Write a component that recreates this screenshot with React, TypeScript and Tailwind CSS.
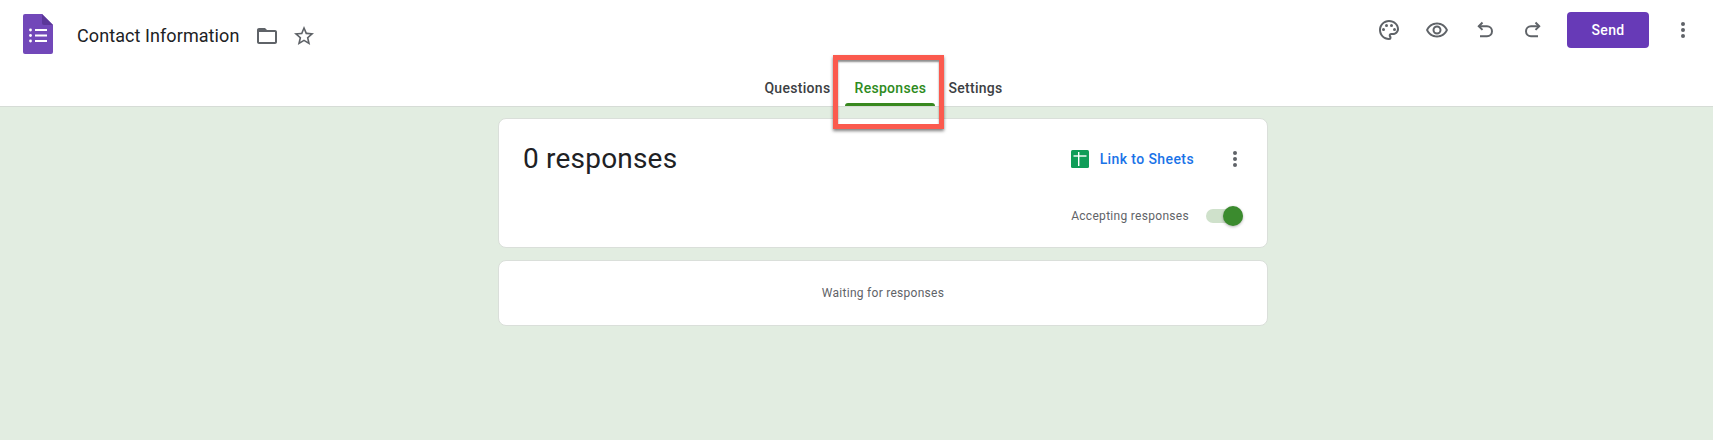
const font = "font-['Roboto','Noto_Sans',sans-serif]";

function FormsLogo() {
  return (
    <svg width="30" height="40" viewBox="0 0 30 40">
      <path d="M2 0h17l11 11v27a2 2 0 0 1-2 2H2a2 2 0 0 1-2-2V2a2 2 0 0 1 2-2z" fill="#7248b9" />
      <path d="M19 0l11 11H21a2 2 0 0 1-2-2z" fill="#5b3799" />
      <g fill="#fff">
        <circle cx="7.5" cy="16" r="1.4" />
        <circle cx="7.5" cy="21.5" r="1.4" />
        <circle cx="7.5" cy="27" r="1.4" />
        <rect x="12" y="15" width="12" height="2" />
        <rect x="12" y="20.5" width="12" height="2" />
        <rect x="12" y="26" width="12" height="2" />
      </g>
    </svg>
  );
}

function FolderIcon() {
  return (
    <svg width="24" height="24" viewBox="0 0 24 24" fill="#5f6368">
      <path d="M20 6h-8l-2-2H4c-1.1 0-2 .9-2 2v12c0 1.1.9 2 2 2h16c1.1 0 2-.9 2-2V8c0-1.1-.9-2-2-2zm0 12H4V8h16v10z" />
    </svg>
  );
}

function StarIcon() {
  return (
    <svg width="24" height="24" viewBox="0 0 24 24" fill="#5f6368">
      <path d="M22 9.24l-7.19-.62L12 2 9.19 8.63 2 9.24l5.46 4.73L5.82 21 12 17.27 18.18 21l-1.63-7.03L22 9.24zM12 15.4l-3.76 2.27 1-4.28-3.32-2.88 4.38-.38L12 6.1l1.71 4.04 4.38.38-3.32 2.88 1 4.28L12 15.4z" />
    </svg>
  );
}

function PaletteIcon() {
  return (
    <svg width="24" height="24" viewBox="0 0 24 24" fill="#5f6368">
      <path d="M12 22C6.49 22 2 17.51 2 12S6.49 2 12 2s10 4.04 10 9c0 3.31-2.69 6-6 6h-1.77c-.28 0-.5.22-.5.5 0 .12.05.23.13.33.41.47.64 1.06.64 1.67A2.5 2.5 0 0 1 12 22zm0-18c-4.41 0-8 3.59-8 8s3.59 8 8 8c.28 0 .5-.22.5-.5a.54.54 0 0 0-.14-.35c-.41-.46-.63-1.05-.63-1.65a2.5 2.5 0 0 1 2.5-2.5H16c2.21 0 4-1.79 4-4 0-3.86-3.59-7-8-7z" />
      <circle cx="6.5" cy="11.5" r="1.5" />
      <circle cx="9.5" cy="7.5" r="1.5" />
      <circle cx="14.5" cy="7.5" r="1.5" />
      <circle cx="17.5" cy="11.5" r="1.5" />
    </svg>
  );
}

function EyeIcon() {
  return (
    <svg width="24" height="24" viewBox="0 0 24 24" fill="#5f6368">
      <path d="M12 6.5c3.79 0 7.17 2.13 8.82 5.5-1.65 3.37-5.02 5.5-8.82 5.5S4.83 15.37 3.18 12C4.83 8.63 8.21 6.5 12 6.5m0-2C7 4.5 2.73 7.61 1 12c1.73 4.39 6 7.5 11 7.5s9.27-3.11 11-7.5c-1.73-4.39-6-7.5-11-7.5zm0 5a2.5 2.5 0 0 1 0 5 2.5 2.5 0 0 1 0-5m0-2c-2.48 0-4.5 2.02-4.5 4.5s2.02 4.5 4.5 4.5 4.5-2.02 4.5-4.5-2.02-4.5-4.5-4.5z" />
    </svg>
  );
}

function UndoIcon({ flip }: { flip?: boolean }) {
  return (
    <svg width="24" height="24" viewBox="0 0 24 24" fill="none" stroke="#5f6368" strokeWidth="2" className={flip ? "-scale-x-100" : ""}>
      <path d="M9.5 4.5 5.8 8.2l3.7 3.7" />
      <path d="M5.8 8.2H14a5 5 0 0 1 0 10H7" />
    </svg>
  );
}

function DotsIcon() {
  return (
    <svg width="24" height="24" viewBox="0 0 24 24" fill="#5f6368">
      <circle cx="12" cy="6" r="2" />
      <circle cx="12" cy="12" r="2" />
      <circle cx="12" cy="18" r="2" />
    </svg>
  );
}

function SheetsIcon() {
  return (
    <svg width="18" height="18" viewBox="0 0 18 18">
      <rect width="18" height="18" rx="1.5" fill="#0f9d58" />
      <rect x="2.5" y="5.3" width="13" height="1.4" fill="#fff" />
      <rect x="7" y="2" width="1.4" height="14" fill="#fff" />
    </svg>
  );
}

export default function App() {
  return (
    <div className={`relative flex h-[440px] w-[1713px] flex-col overflow-hidden bg-[#e2ede1] ${font}`}>
      <header className="h-[107px] shrink-0 border-b border-[#d6dcd6] bg-white">
        <div className="flex h-[71px] items-center pl-[23px] pr-[18px]">
          <span className="-mt-[3px]">
            <FormsLogo />
          </span>
          <span className="ml-[24px] text-[18px] tracking-[0.08px] text-[#202124]">Contact Information</span>
          <span className="ml-[16px] flex items-center gap-[13px]">
            <FolderIcon />
            <StarIcon />
          </span>
          <div className="-mt-[11px] ml-auto flex items-center">
            <PaletteIcon />
            <span className="ml-[24px]">
              <EyeIcon />
            </span>
            <span className="ml-[24px]">
              <UndoIcon />
            </span>
            <span className="ml-[24px]">
              <UndoIcon flip />
            </span>
            <button className="ml-[22px] h-[36px] w-[82px] rounded-[4px] bg-[#673ab7] text-[14px] font-medium tracking-[0.3px] text-white">
              Send
            </button>
            <span className="ml-[22px]">
              <DotsIcon />
            </span>
          </div>
        </div>
        <nav className="flex h-[35px] justify-center pl-[54px] text-[14px] font-medium tracking-[0.3px] text-[#3c4043]">
          <span className="pt-[7px] pr-[15px]">Questions</span>
          <span className="relative w-[90px] pt-[7px] text-center text-[#2e8b21]">
            Responses
            <span className="absolute bottom-0 left-0 h-[3px] w-full rounded-t-[3px] bg-[#38881f]" />
          </span>
          <span className="pt-[7px] pl-[13px]">Settings</span>
        </nav>
      </header>

      <main className="ml-[498px] mt-[11px] flex w-[770px] flex-col gap-[12px]">
        <section className="h-[130px] rounded-lg border border-[#dadfda] bg-white pl-[24px] pr-[20px]">
          <div className="flex h-[80px] items-center">
            <h1 className="text-[28px] tracking-[0.2px] text-[#202124]">0 responses</h1>
            <div className="ml-auto flex items-center">
              <SheetsIcon />
              <span className="ml-[11px] text-[14px] font-medium tracking-[0.4px] text-[#1a73e8]">Link to Sheets</span>
              <span className="ml-[29px]">
                <DotsIcon />
              </span>
            </div>
          </div>
          <div className="mt-[8px] mr-[4px] flex items-center justify-end">
            <span className="text-[12px] tracking-[0.3px] text-[#5f6368]">Accepting responses</span>
            <span className="relative ml-[17px] h-[14px] w-[37px] rounded-full bg-[#cfe1cb]">
              <span className="absolute -top-[3px] right-0 h-5 w-5 rounded-full bg-[#3b8b2e] shadow-[0_1px_3px_rgba(0,0,0,0.3)]" />
            </span>
          </div>
        </section>
        <section className="flex h-[66px] items-center justify-center rounded-lg border border-[#dadfda] bg-white text-[12px] tracking-[0.27px] text-[#5f6368]">
          Waiting for responses
        </section>
      </main>

      <div className="absolute left-[833px] top-[55px] h-[74px] w-[111px] border-[5px] border-[#fb5a4e] shadow-[0_2px_3px_rgba(0,0,0,0.5),inset_0_2px_2px_rgba(0,0,0,0.45)]" />
    </div>
  );
}
